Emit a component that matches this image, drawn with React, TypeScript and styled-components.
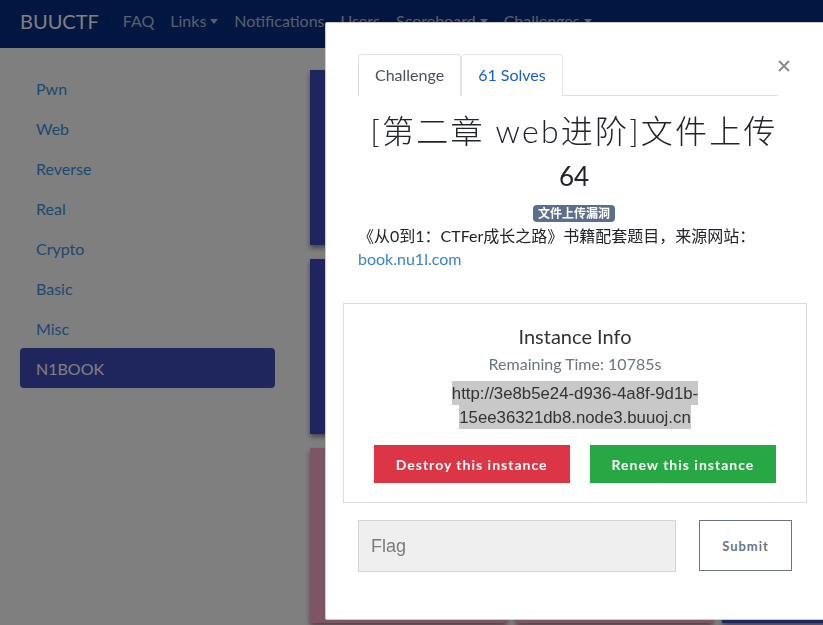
import React from "react";
import styled, { createGlobalStyle, css } from "styled-components";

const GlobalStyle = createGlobalStyle`
  html, body { margin: 0; padding: 0; height: 100%; overflow: hidden; background: #ffffff; }
  body { font-family: Lato, "Noto Sans CJK SC", sans-serif; color: #212529; }
  * { box-sizing: border-box; }
`;

const Navbar = styled.nav`
  height: 48px;
  background: #022c80;
  display: flex;
  align-items: flex-start;
  padding: 0 20px;
`;

const Brand = styled.span`
  font-size: 20px;
  line-height: 30px;
  margin-top: 6px;
  color: #ffffff;
  margin-right: 16px;
`;

const NavLink = styled.span<{ $caret?: boolean }>`
  font-size: 16px;
  line-height: 24px;
  margin-top: 9px;
  color: rgba(255, 255, 255, 0.7);
  padding: 0 8px;
  ${(p) =>
    p.$caret &&
    css`
      &::after {
        content: "";
        display: inline-block;
        margin-left: 4px;
        vertical-align: 3px;
        border-top: 5px solid currentColor;
        border-left: 4.5px solid transparent;
        border-right: 4.5px solid transparent;
      }
    `}
`;

const Main = styled.div`
  display: flex;
  gap: 35px;
  padding: 20px 0 0 20px;
`;

const SideNav = styled.div`
  width: 255px;
  display: flex;
  flex-direction: column;
  flex-shrink: 0;
`;

const SideItem = styled.div<{ $active?: boolean }>`
  height: 40px;
  display: flex;
  align-items: center;
  padding: 0 16px;
  font-size: 16px;
  color: #3d92dc;
  border-radius: 4px;
  ${(p) =>
    p.$active &&
    css`
      background: #3e4cbc;
      color: #ffffff;
    `}
`;

const CardGrid = styled.div`
  display: grid;
  grid-template-columns: repeat(3, 197px);
  column-gap: 9px;
  row-gap: 14px;
  padding-top: 2px;
  flex-shrink: 0;
`;

const Card = styled.div<{ $color: string }>`
  height: 175px;
  background: ${(p) => p.$color};
  box-shadow: 0 3px 5px rgba(0, 0, 0, 0.45);
`;

const Backdrop = styled.div`
  position: fixed;
  inset: 0;
  background: rgba(0, 0, 0, 0.5);
  display: flex;
  align-items: flex-start;
  padding: 22px 0 0 325px;
`;

const Modal = styled.div`
  width: 500px;
  flex-shrink: 0;
  background: #ffffff;
  border: 1px solid rgba(0, 0, 0, 0.2);
  border-radius: 2px;
  padding: 31px 34px 47px 32px;
  display: flex;
  flex-direction: column;
`;

const Header = styled.div`
  display: flex;
  align-items: flex-start;
`;

const Tabs = styled.ul`
  flex: 1;
  display: flex;
  margin: 0;
  padding: 0;
  list-style: none;
  border-bottom: 1px solid #dee2e6;
`;

const Tab = styled.li<{ $active?: boolean }>`
  padding: 8px 16px;
  font-size: 16px;
  line-height: 24px;
  border: 1px solid #e3e6ea;
  border-bottom: none;
  border-radius: 4px 4px 0 0;
  margin-bottom: -1px;
  background: #ffffff;
  height: 42px;
  color: ${(p) => (p.$active ? "#495057" : "#1a62c0")};
  ${(p) =>
    p.$active &&
    css`
      border-color: #dee2e6;
    `}
`;

const CloseButton = styled.button`
  border: none;
  background: none;
  padding: 0;
  margin-top: 6px;
  width: 12px;
  height: 12px;
  display: flex;
  align-items: center;
  justify-content: center;
  cursor: pointer;
`;

const Title = styled.h2`
  margin: 16px 0 0;
  font-size: 32px;
  line-height: 38px;
  font-weight: 300;
  letter-spacing: 2.2px;
  text-align: center;
  white-space: nowrap;
  color: #212529;
`;

const Value = styled.h4`
  margin: 11px 0 0;
  font-size: 26px;
  line-height: 30px;
  font-weight: 400;
  text-align: center;
  color: #212529;
`;

const BadgeRow = styled.div`
  margin-top: 14px;
  height: 17px;
  line-height: 17px;
  text-align: center;
`;

const Badge = styled.span`
  display: inline-block;
  height: 17px;
  padding: 0 5px;
  font-size: 12px;
  font-weight: 700;
  line-height: 17px;
  background: #5b6e8e;
  color: #ffffff;
  border-radius: 4px;
  vertical-align: top;
`;

const Description = styled.p`
  margin: 2px 0 0;
  font-size: 16px;
  line-height: 23px;
  color: #212529;
`;

const Link = styled.a`
  color: #3b83c6;
  text-decoration: none;
`;

const InstanceBox = styled.div`
  margin: 33px -17px 0 -15px;
  border: 1px solid #dddddd;
  padding: 20px 20px 19px;
  text-align: center;
`;

const InstanceTitle = styled.h5`
  margin: 0;
  font-size: 20px;
  line-height: 24px;
  font-weight: 400;
  color: #333333;
`;

const Remaining = styled.div`
  margin-top: 4px;
  font-size: 16px;
  line-height: 24px;
  color: #6c757d;
`;

const UrlLine = styled.div`
  margin-top: 5px;
  font-family: "Liberation Sans", Arial, sans-serif;
  font-size: 16.8px;
  line-height: 24px;
  color: #333333;
`;

const UrlMark = styled.span`
  background: #c8c8c8;
  padding: 2.5px 0;
`;

const ButtonRow = styled.div`
  margin-top: 16px;
  display: flex;
  justify-content: center;
  gap: 20px;
`;

const ActionButton = styled.button<{ $variant: "danger" | "success" }>`
  height: 38px;
  padding: 0 22px;
  border: none;
  border-radius: 0;
  font-family: Lato, sans-serif;
  font-size: 14px;
  font-weight: 700;
  letter-spacing: 1px;
  color: #ffffff;
  background: ${(p) => (p.$variant === "danger" ? "#dc3545" : "#28a745")};
`;

const FlagRow = styled.div`
  margin-top: 17px;
  display: flex;
  align-items: flex-start;
  gap: 23px;
`;

const FlagInput = styled.input`
  width: 318px;
  height: 52px;
  flex-shrink: 0;
  background: #efefef;
  border: 1px solid #d0d5dc;
  border-radius: 0;
  padding: 0 12px;
  font-family: "Liberation Sans", Arial, sans-serif;
  font-size: 18px;
  color: #333;
  outline: none;
  &::placeholder {
    color: #7b7b7b;
  }
`;

const SubmitButton = styled.button`
  width: 93px;
  height: 51px;
  flex-shrink: 0;
  background: #ffffff;
  border: 1px solid #6c757d;
  border-radius: 0;
  font-family: Lato, sans-serif;
  font-size: 13px;
  font-weight: 700;
  letter-spacing: 1px;
  color: #6c757d;
`;

const categories = ["Pwn", "Web", "Reverse", "Real", "Crypto", "Basic", "Misc", "N1BOOK"];
const cardColors = [
  "#3e4cbf", "#3e4cbf", "#3e4cbf",
  "#3e4cbf", "#3e4cbf", "#3e4cbf",
  "#faaaca", "#faaaca", "#3e4cbf",
];

export default function App() {
  return (
    <>
      <GlobalStyle />
      <Navbar>
        <Brand>BUUCTF</Brand>
        <NavLink>FAQ</NavLink>
        <NavLink $caret>Links</NavLink>
        <NavLink>Notifications</NavLink>
        <NavLink>Users</NavLink>
        <NavLink $caret>Scoreboard</NavLink>
        <NavLink $caret>Challenges</NavLink>
      </Navbar>
      <Main>
        <SideNav>
          {categories.map((c) => (
            <SideItem key={c} $active={c === "N1BOOK"}>
              {c}
            </SideItem>
          ))}
        </SideNav>
        <CardGrid>
          {cardColors.map((c, i) => (
            <Card key={i} $color={c} />
          ))}
        </CardGrid>
      </Main>
      <Backdrop>
        <Modal>
          <Header>
            <Tabs>
              <Tab $active>Challenge</Tab>
              <Tab>61 Solves</Tab>
            </Tabs>
            <CloseButton aria-label="Close">
              <svg width="12" height="12" viewBox="0 0 12 12">
                <path d="M1 1 L11 11 M11 1 L1 11" stroke="#8a8a8a" strokeWidth="2" />
              </svg>
            </CloseButton>
          </Header>
          <Title>[第二章 web进阶]文件上传</Title>
          <Value>64</Value>
          <BadgeRow>
            <Badge>文件上传漏洞</Badge>
          </BadgeRow>
          <Description>
            《从0到1：CTFer成长之路》书籍配套题目，来源网站：
            <Link href="#">book.nu1l.com</Link>
          </Description>
          <InstanceBox>
            <InstanceTitle>Instance Info</InstanceTitle>
            <Remaining>Remaining Time: 10785s</Remaining>
            <UrlLine>
              <UrlMark>http://3e8b5e24-d936-4a8f-9d1b-15ee36321db8.node3.buuoj.cn</UrlMark>
            </UrlLine>
            <ButtonRow>
              <ActionButton $variant="danger">Destroy this instance</ActionButton>
              <ActionButton $variant="success">Renew this instance</ActionButton>
            </ButtonRow>
          </InstanceBox>
          <FlagRow>
            <FlagInput placeholder="Flag" />
            <SubmitButton>Submit</SubmitButton>
          </FlagRow>
        </Modal>
      </Backdrop>
    </>
  );
}
